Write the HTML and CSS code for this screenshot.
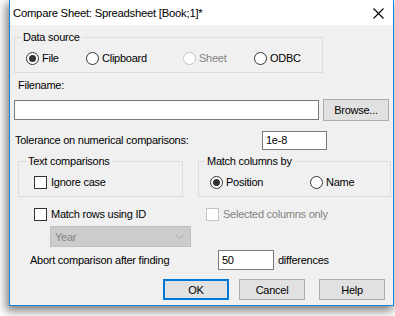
FILE: index.html
```html
<!DOCTYPE html>
<html>
<head>
<meta charset="utf-8">
<title>Compare Sheet</title>
<link rel="stylesheet" href="styles.css">
</head>
<body>
<div class="window">
  <div class="titlebar">
    <span class="title">Compare Sheet: Spreadsheet [Book;1]*</span>
    <svg class="close" width="11" height="11" viewBox="0 0 11 11"><path d="M0.5 0.5L10.5 10.5M10.5 0.5L0.5 10.5" stroke="#000" stroke-width="1.1" fill="none"/></svg>
  </div>
  <div class="client">
    <fieldset class="group ds">
      <legend>Data source</legend>
      <div class="opts">
        <label class="opt w-file"><span class="radio on"></span>File</label>
        <label class="opt w-clip"><span class="radio"></span>Clipboard</label>
        <label class="opt w-sheet disabled"><span class="radio"></span>Sheet</label>
        <label class="opt"><span class="radio"></span>ODBC</label>
      </div>
    </fieldset>

    <div class="lbl filename">Filename:</div>

    <div class="file-row">
      <div class="input wide"></div>
      <div class="btn browse">Browse...</div>
    </div>

    <div class="tol-row">
      <span class="lbl tol-lbl">Tolerance on numerical comparisons:</span>
      <div class="input tol">1e-8</div>
    </div>

    <div class="groups">
      <fieldset class="group text">
        <legend>Text comparisons</legend>
        <div class="opts text-opts">
          <label class="opt"><span class="check"></span>Ignore case</label>
        </div>
      </fieldset>
      <fieldset class="group match">
        <legend>Match columns by</legend>
        <div class="opts match-opts">
          <label class="opt w-pos"><span class="radio on"></span>Position</label>
          <label class="opt"><span class="radio"></span>Name</label>
        </div>
      </fieldset>
    </div>

    <div class="check-row">
      <label class="opt w-rows"><span class="check"></span>Match rows using ID</label>
      <label class="opt disabled"><span class="check"></span>Selected columns only</label>
    </div>

    <div class="combo">
      <span>Year</span>
      <svg class="chev" width="9" height="5" viewBox="0 0 9 5"><path d="M0.5 0.5L4.5 4.5L8.5 0.5" stroke="#a6a6a6" stroke-width="1" fill="none"/></svg>
    </div>

    <div class="abort-row">
      <span class="lbl abort-lbl">Abort comparison after finding</span>
      <div class="input num">50</div>
      <span class="lbl diff">differences</span>
    </div>

    <div class="buttons">
      <div class="btn ok">OK</div>
      <div class="btn cancel">Cancel</div>
      <div class="btn help">Help</div>
    </div>
  </div>
</div>
</body>
</html>
```

FILE: styles.css
```css
html, body {
  margin: 0;
  padding: 0;
  background: #ffffff;
}

body {
  width: 395px;
  height: 316px;
  overflow: hidden;
  font-family: "Liberation Sans", Arial, sans-serif;
  font-size: 11px;
  letter-spacing: -0.25px;
  color: #000;
}

.window {
  margin-left: 9px;
  width: 385px;
  height: 306px;
  box-sizing: border-box;
  border: 1px solid #1883d7;
  border-top: none;
  background: #f0f0f0;
  box-shadow: -2px 4px 9px 1px rgba(0, 0, 0, 0.5);
  display: flex;
  flex-direction: column;
}

.titlebar {
  height: 25px;
  background: #ffffff;
  display: flex;
  align-items: center;
  justify-content: space-between;
  flex: none;
}

.title {
  margin-left: 3px;
  font-size: 11.3px;
  line-height: 16px;
  margin-top: 1px;
}

.close {
  margin-right: 9px;
  margin-top: 1px;
}

.client {
  flex: 1;
  display: flex;
  flex-direction: column;
  align-items: flex-start;
}

.lbl {
  line-height: 14px;
}

/* group boxes */
.group {
  margin: 0;
  padding: 0;
  border: 1px solid #dcdcdc;
  min-width: 0;
  box-sizing: border-box;
}

.group legend {
  padding: 0 2px;
  line-height: 14px;
}

.opts {
  display: flex;
  align-items: center;
  height: 14px;
}

.opt {
  display: flex;
  align-items: center;
  gap: 3px;
  line-height: 14px;
  white-space: nowrap;
}

.opt.disabled {
  color: #838383;
}

.radio {
  width: 13px;
  height: 13px;
  box-sizing: border-box;
  border: 1px solid #333;
  border-radius: 50%;
  background: #fff;
  display: flex;
  align-items: center;
  justify-content: center;
  flex: none;
}

.radio.on::after {
  content: "";
  width: 7px;
  height: 7px;
  border-radius: 50%;
  background: #333;
}

.disabled .radio,
.disabled .check {
  border-color: #c4c4c4;
}

.check {
  width: 13px;
  height: 13px;
  box-sizing: border-box;
  border: 1px solid #333;
  background: #fff;
  flex: none;
  margin-right: 1px;
}

.ds {
  margin-top: 5px;
  margin-left: 4px;
  width: 309px;
}

.ds legend {
  margin-left: 6px;
}

.ds .opts {
  margin-top: 7px;
  margin-bottom: 7px;
  margin-left: 11px;
}

.w-file { width: 60px; }
.w-clip { width: 97px; }
.w-sheet { width: 71px; }

.filename {
  margin-top: 5px;
  margin-left: 8px;
}

/* inputs and buttons */
.input {
  background: #fff;
  border: 1px solid #7a7a7a;
  box-sizing: border-box;
  height: 20px;
  line-height: 18px;
  padding-left: 3px;
}

.btn {
  background: #e1e1e1;
  border: 1px solid #adadad;
  box-sizing: border-box;
  width: 66px;
  height: 22px;
  display: flex;
  align-items: center;
  justify-content: center;
}

.file-row {
  margin-top: 7px;
  margin-left: 4px;
  display: flex;
  align-items: center;
  height: 22px;
}

.wide {
  width: 305px;
  margin-right: 4px;
}

.tol-row {
  margin-top: 9px;
  margin-left: 5px;
  display: flex;
  align-items: center;
  height: 20px;
}

.tol-lbl {
  width: 247px;
}

.tol {
  width: 65px;
  height: 19px;
  line-height: 17px;
}

.groups {
  margin-top: 4px;
  margin-left: 8px;
  display: flex;
  gap: 15px;
}

.text {
  width: 165px;
}

.text legend {
  margin-left: 7px;
}

.match {
  width: 193px;
}

.match legend {
  margin-left: 6px;
}

.group .text-opts,
.group .match-opts {
  margin-top: 7px;
  margin-bottom: 7px;
}

.text-opts {
  margin-left: 15px;
}

.match-opts {
  margin-left: 11px;
}

.w-pos { width: 100px; }

.check-row {
  margin-top: 10px;
  margin-left: 24px;
  display: flex;
  align-items: center;
  height: 14px;
}

.w-rows { width: 172px; }

.combo {
  margin-top: 5px;
  margin-left: 40px;
  width: 141px;
  height: 21px;
  box-sizing: border-box;
  background: #cccccc;
  border: 1px solid #bfbfbf;
  color: #838383;
  display: flex;
  align-items: center;
  justify-content: space-between;
  padding: 0 6px 0 4px;
}

.abort-row {
  margin-top: 3px;
  margin-left: 20px;
  display: flex;
  align-items: center;
  height: 20px;
}

.abort-lbl {
  width: 188px;
}

.num {
  width: 56px;
}

.diff {
  margin-left: 4px;
}

.buttons {
  margin-top: 9px;
  margin-left: 153px;
  display: flex;
}

.buttons .btn {
  height: 21px;
}

.ok {
  border: 2px solid #0078d7;
}

.cancel {
  margin-left: 10px;
}

.help {
  margin-left: 14px;
}
```
